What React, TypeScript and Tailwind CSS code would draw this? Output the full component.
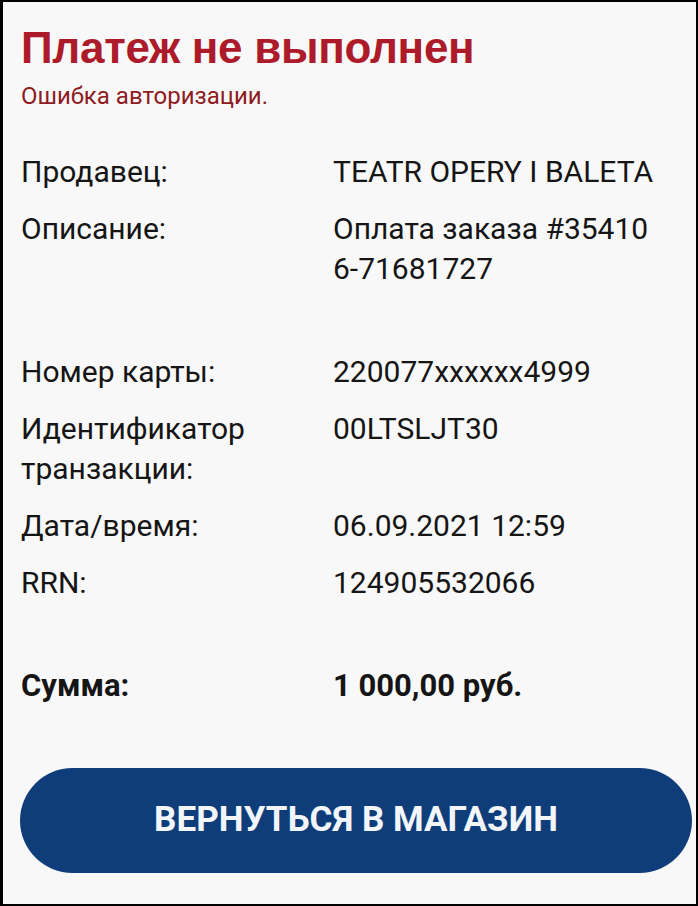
import React from "react";

const rows: { label: string[]; value: string[]; gapAfter?: boolean }[] = [
  { label: ["Продавец:"], value: ["TEATR OPERY I BALETA"] },
  { label: ["Описание:"], value: ["Оплата заказа #35410", "6-71681727"], gapAfter: true },
  { label: ["Номер карты:"], value: ["220077xxxxxx4999"] },
  { label: ["Идентификатор", "транзакции:"], value: ["00LTSLJT30"] },
  { label: ["Дата/время:"], value: ["06.09.2021 12:59"] },
  { label: ["RRN:"], value: ["124905532066"], gapAfter: true },
];

export default function App() {
  return (
    <div className="w-[698px] h-[906px] bg-white">
      <div className="h-full border-l-[3px] border-t-2 border-r-2 border-b-2 border-black bg-[#f8f8f8] pl-[18px] pr-[4px] flex flex-col">
        <h1
          className="text-[44px] leading-[48px] font-bold text-[#ad1a2a] mt-[22px] tracking-[-0.3px]"
          style={{ fontFamily: '"Liberation Sans", Arial, sans-serif' }}
        >
          Платеж не выполнен
        </h1>
        <p
          className="text-[24px] leading-[28px] text-[#8e1b22] mt-[10px]"
          style={{ fontFamily: 'Roboto, "Liberation Sans", sans-serif' }}
        >
          Ошибка авторизации.
        </p>
        <div
          className="mt-[42px] text-[30px] leading-[40px] text-[#151515]"
          style={{ fontFamily: 'Roboto, "Liberation Sans", sans-serif' }}
        >
          {rows.map((r, i) => (
            <div
              key={i}
              className={`grid grid-cols-[312px_1fr] ${r.gapAfter ? "mb-[63px]" : "mb-[17px]"}`}
            >
              <div>
                {r.label.map((l, j) => (
                  <div key={j}>{l}</div>
                ))}
              </div>
              <div>
                {r.value.map((v, j) => (
                  <div key={j}>{v}</div>
                ))}
              </div>
            </div>
          ))}
          <div className="grid grid-cols-[312px_1fr] font-bold text-[31px]">
            <div>Сумма:</div>
            <div>1 000,00 руб.</div>
          </div>
        </div>
        <button
          className="mt-[62px] -ml-[1px] h-[105px] w-[672px] rounded-full bg-[#0f3d7a] text-[#f2f6fb] text-[35px] font-bold"
          style={{ fontFamily: 'Roboto, "Liberation Sans", sans-serif' }}
        >
          ВЕРНУТЬСЯ В МАГАЗИН
        </button>
      </div>
    </div>
  );
}
